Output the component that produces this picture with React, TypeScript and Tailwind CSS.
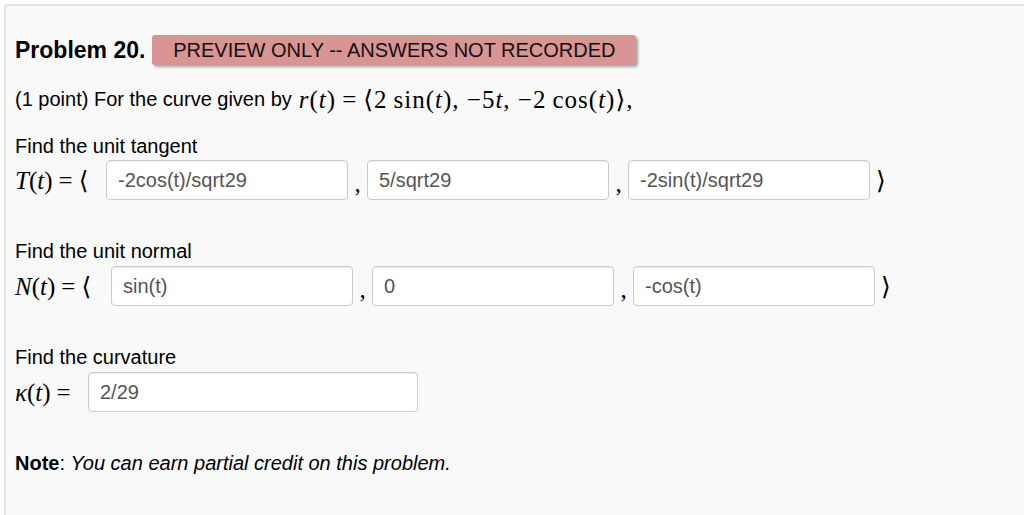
const MATH = "font-['Liberation_Serif','DejaVu_Serif',serif] text-[25px] leading-none text-black";

function V({ children }: { children: React.ReactNode }) {
  return <span className="italic">{children}</span>;
}

function Eq() {
  return <span className="mx-[6px]">=</span>;
}

function Answer({ value, w = "w-[242px]" }: { value: string; w?: string }) {
  return (
    <div
      className={`${w} h-10 shrink-0 rounded-[4px] border border-[#cccccc] bg-white pl-[11px] pt-[7px] text-[20px] leading-6 text-[#555555] shadow-[inset_0_1px_1px_rgba(0,0,0,0.075)]`}
    >
      {value}
    </div>
  );
}

function Comma() {
  return <span className={`${MATH} flex w-[19px] shrink-0 justify-center self-end pb-[4px]`}>,</span>;
}

function VectorRow({ label, values, lead }: { label: React.ReactNode; values: string[]; lead: string }) {
  return (
    <div className="flex items-center">
      <span className={`${MATH} ${lead} shrink-0 whitespace-nowrap`}>{label}</span>
      <Answer value={values[0]} />
      <Comma />
      <Answer value={values[1]} />
      <Comma />
      <Answer value={values[2]} />
      <span className={`${MATH} ml-[6px]`}>⟩</span>
    </div>
  );
}

export default function App() {
  return (
    <div className="h-[515px] overflow-hidden bg-white pl-1 pt-1 font-['Liberation_Sans',Arial,sans-serif] text-[20px] text-black">
      <div className="h-full rounded-tl-[4px] border-l-2 border-t-2 border-[#e3e3e3] bg-[#f9f9f9] pl-[9px] pt-[29px]">
        {/* header */}
        <div className="flex items-center gap-[7px]">
          <span className="text-[23px] font-bold leading-none">Problem 20.</span>
          <span className="flex h-[30px] w-[484px] items-center justify-center rounded-[3px] bg-[#d99494] text-[20px] text-[#111] shadow-[2px_2px_3px_rgba(0,0,0,0.35)]">
            PREVIEW ONLY -- ANSWERS NOT RECORDED
          </span>
        </div>

        <div className="mt-[19px] flex h-[30px] items-center">
          <span>(1 point) For the curve given by</span>
          <span className={`${MATH} ml-[7px] whitespace-nowrap tracking-[1px]`}>
            <V>r</V>(<V>t</V>)<Eq />⟨2&thinsp;sin(<V>t</V>), −5<V>t</V>, −2&thinsp;cos(<V>t</V>)⟩,
          </span>
        </div>

        <p className="mt-[20px] leading-6">Find the unit tangent</p>
        <div className="mt-[2px]">
          <VectorRow
            lead="w-[91px]"
            label={<><V>T</V>(<V>t</V>)<Eq />⟨</>}
            values={["-2cos(t)/sqrt29", "5/sqrt29", "-2sin(t)/sqrt29"]}
          />
        </div>

        <p className="mt-[39px] leading-6">Find the unit normal</p>
        <div className="mt-[3px]">
          <VectorRow
            lead="w-[96px]"
            label={<><V>N</V>(<V>t</V>)<Eq />⟨</>}
            values={["sin(t)", "0", "-cos(t)"]}
          />
        </div>

        <p className="mt-[39px] leading-6">Find the curvature</p>
        <div className="mt-[3px] flex items-center">
          <span className={`${MATH} w-[73px] shrink-0 whitespace-nowrap`}>
            <V>κ</V>(<V>t</V>)<Eq />
          </span>
          <Answer value="2/29" w="w-[330px]" />
        </div>

        <p className="mt-[39px] leading-6">
          <b>Note</b>: <i>You can earn partial credit on this problem.</i>
        </p>
      </div>
    </div>
  );
}
